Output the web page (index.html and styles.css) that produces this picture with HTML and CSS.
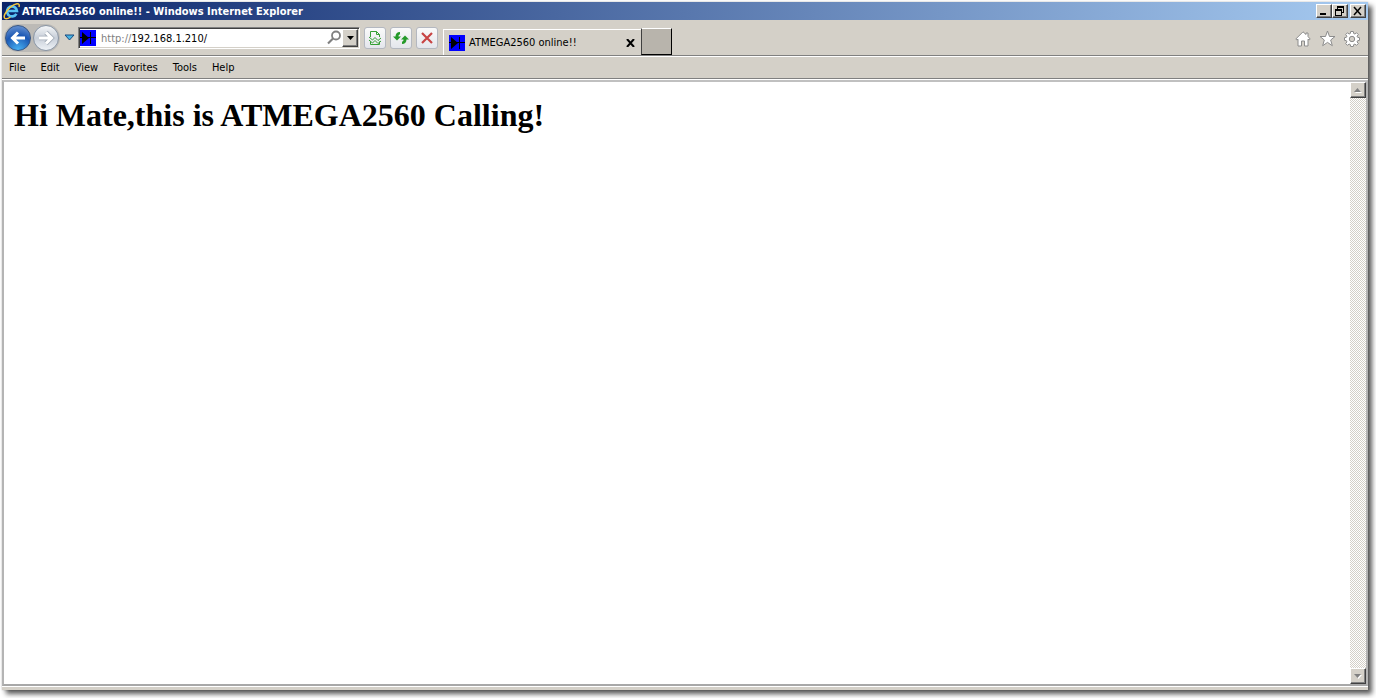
FILE: index.html
```html
<!DOCTYPE html>
<html lang="en">
<head>
    <meta charset="UTF-8">
    <title>ATMEGA2560 online!!</title>
    <link rel="stylesheet" href="styles.css">
</head>
<body>
    <!-- shapes used more than once -->
    <svg width="0" height="0" class="defs">
        <symbol id="diode" viewBox="0 0 16 16">
            <path fill="#00f" d="M0 0h16v16H0z"/>
            <path d="M2 2l7 6-7 6zM10 2h1v12h-1zM0 7h16v1H0z"/>
        </symbol>
    </svg>

    <div class="window">
        <div class="titlebar">
            <svg class="logo" width="18" height="18" viewBox="0 0 18 18">
                <path d="M13.4 11.8A5 5 0 1 1 14 9H5" fill="none" stroke="#58c4f4" stroke-width="2.6"/>
                <path d="M16 5C17.5 0 12 1 7 5.500C2 10 0 15 2 16.500C3.500 17.500 6 16 7.500 15" fill="none" stroke="#f5c73c" stroke-width="1.500"/>
            </svg>
            <span class="caption">ATMEGA2560 online!! - Windows Internet Explorer</span>
            <button class="raised" aria-label="Minimize">
                <svg width="12" height="10"><path d="M2 7h6v2H2z"/></svg>
            </button>
            <button class="raised" aria-label="Restore">
                <svg width="12" height="10"><path fill-rule="evenodd" d="M3 0h7v7H8V6h1V2H4v1H3zM1 3h7v7H1zM2 5v4h5V5z"/></svg>
            </button>
            <button class="raised close" aria-label="Close">
                <svg width="12" height="10"><path d="M2 1l7 8M9 1L2 9" stroke="#000" stroke-width="1.500"/></svg>
            </button>
        </div>

        <div class="toolbar">
            <div class="nav">
                <button class="round back" aria-label="Back">
                    <svg width="18" height="18"><path d="M16 9H4M9 3.500L3.500 9L9 14.500" fill="none" stroke="#fff" stroke-width="3"/></svg>
                </button>
                <button class="round forward" aria-label="Forward">
                    <svg width="18" height="18"><path d="M2 9H14M9 3.500L14.500 9L9 14.500" fill="none" stroke="#a3acb8" stroke-width="4.600"/><path d="M2 9H14M9 3.500L14.500 9L9 14.500" fill="none" stroke="#fff" stroke-width="3"/></svg>
                </button>
            </div>
            <button class="recent" aria-label="Recent pages">
                <svg width="11" height="7"><path d="M1 1h9L5.500 6z" fill="#48b4e4" stroke="#174a80"/></svg>
            </button>
            <div class="address">
                <svg width="16" height="16"><use href="#diode"/></svg>
                <label for="url">http://</label>
                <input type="text" id="url" value="192.168.1.210/">
                <button class="search" aria-label="Search">
                    <svg width="15" height="15"><circle cx="9" cy="5.500" r="4" fill="none" stroke="#808080" stroke-width="1.800"/><path d="M6 8.500L1 13.500" stroke="#808080" stroke-width="2.200"/></svg>
                </button>
                <button class="raised drop" aria-label="Show address list">
                    <svg width="7" height="4"><path d="M0 0h7L3.500 4z"/></svg>
                </button>
            </div>
            <button class="tool" aria-label="Compatibility View">
                <svg width="14" height="16"><path d="M2.500 7V1.500h6l3 3V7M8.500 1.500v3h3M2.500 11.500v3h9v-3" fill="none" stroke="#35a035"/><path d="M1 7l3.500 3L7 7.500l3 3L13 8M1 10l3.500 3L7 10.500l3 3L13 11" fill="none" stroke="#35a035"/></svg>
            </button>
            <button class="tool" aria-label="Refresh">
                <svg width="16" height="16"><path d="M0 6.500h2.500C2.500 4 4 2 7 2v2.500C6 4.500 5.500 5 5.500 6.500H8L4 10.500z" fill="#259a2a"/><path d="M16 9.500h-2.500c0 2.500-1.500 4.500-4.500 4.500v-2.500c1 0 1.500-.5 1.500-2H8l4-4z" fill="#259a2a"/></svg>
            </button>
            <button class="tool" aria-label="Stop">
                <svg width="14" height="14"><path d="M2 2l10 10M12 2L2 12" stroke="#c84444" stroke-width="2.200"/></svg>
            </button>
            <div class="tabs">
                <div class="tab">
                    <svg width="16" height="16"><use href="#diode"/></svg>
                    <span>ATMEGA2560 online!!</span>
                    <button aria-label="Close tab">
                        <svg width="9" height="8"><path d="M1 0l7 8M8 0L1 8" stroke="#000" stroke-width="2"/></svg>
                    </button>
                </div>
                <button class="newtab" aria-label="New tab"></button>
            </div>
            <div class="commands">
                <button aria-label="Home">
                    <svg width="16" height="16"><path d="M8 .8L.8 8l1 1L3 8.200V15h3.500v-5h3v5H13V8.200L14.200 9l1-1L13 5.500V2h-2v1.500z" fill="#fff" stroke="#8c8c8c"/></svg>
                </button>
                <button aria-label="Favorites">
                    <svg width="17" height="17"><path d="M8.500 1l2 5.500H16l-4.300 3.500 1.600 5.700-4.800-3.300-4.800 3.300L5.300 10 1 6.500h5.500z" fill="#fff" stroke="#8c8c8c"/></svg>
                </button>
                <button aria-label="Tools">
                    <svg width="16" height="16">
                        <path d="M6.700 .5h2.600l.4 2 1.200.5 1.700-1.200 1.700 1.700L13.100 5.200l.5 1.100 1.900.4v2.600l-1.900.4-.5 1.200 1.200 1.700-1.700 1.700-1.700-1.200-1.200.5-.4 1.900H6.700l-.4-1.900-1.200-.5-1.700 1.200-1.700-1.700 1.200-1.700-.5-1.200-1.900-.4V6.700l1.900-.4.5-1.100L1.700 3.500l1.700-1.700L5.100 3l1.200-.5z" fill="#fff" stroke="#8c8c8c"/>
                        <circle cx="8" cy="8" r="2.700" fill="#d4d0c8" stroke="#8c8c8c"/>
                    </svg>
                </button>
            </div>
        </div>

        <div class="menubar">
            <button>File</button>
            <button>Edit</button>
            <button>View</button>
            <button>Favorites</button>
            <button>Tools</button>
            <button>Help</button>
        </div>

        <div class="view">
            <div class="page">
                <h1>Hi Mate,this is ATMEGA2560 Calling!</h1>
            </div>
            <div class="scrollbar">
                <button class="raised" aria-label="Scroll up">
                    <svg width="8" height="5"><path d="M1 5h7L4.500 1z" fill="#fff"/><path d="M0 4h7L3.500 0z" fill="#808080"/></svg>
                </button>
                <button class="raised" aria-label="Scroll down">
                    <svg width="8" height="5"><path d="M1 1h7L4.500 5z" fill="#fff"/><path d="M0 0h7L3.500 4z" fill="#808080"/></svg>
                </button>
            </div>
        </div>
    </div>
</body>
</html>
```
FILE: styles.css
```css
*{
    box-sizing: border-box;
    padding: 0;
    margin: 0;
}

body{
    height: 100vh;
    padding: 2px 8px 8px 2px;
    background: #fff;
    font: 11px/14px "DejaVu Sans Condensed", "DejaVu Sans", sans-serif;
    color: #000;
}

button, input{
    border: 0;
    background: none;
    font: inherit;
    color: inherit;
}

button{
    display: flex;
    align-items: center;
    justify-content: center;
    flex-shrink: 0;
}

svg{
    display: block;
    flex-shrink: 0;
}

.defs{
    position: absolute;
}

.window{
    display: flex;
    flex-direction: column;
    height: 100%;
    padding-bottom: 2px;
    background: #d4d0c8;
    box-shadow: 4px 4px 5px rgba(0,0,0,.65), 0 0 2px rgba(0,0,0,.2);
}

/* raised 3D button */
.raised{
    width: 16px;
    height: 14px;
    background: #d4d0c8;
    border: 1px solid;
    border-color: #fff #404040 #404040 #fff;
    box-shadow: inset -1px -1px #808080;
}

.titlebar{
    display: flex;
    align-items: center;
    height: 18px;
    padding: 0 2px 0 1px;
    background: linear-gradient(to right, #0a246a, #a6caf0);
    color: #fff;
    font-weight: bold;
}

.caption{
    flex: 1;
    padding-top: 1px;
    margin-left: 1px;
    white-space: nowrap;
}

.close{
    margin-left: 2px;
}

.toolbar{
    display: flex;
    align-items: center;
    height: 36px;
    padding-left: 2px;
    border-bottom: 1px solid #808080;
}

.nav{
    display: flex;
    gap: 2px;
    padding: 1px;
    border-radius: 14px;
    background: #bcbab6;
}

.round{
    width: 26px;
    height: 26px;
    border-radius: 50%;
}

.back{
    border: 1px solid #355585;
    background: radial-gradient(circle at 50% 100%, #49b4f4, #1c58b4 55%, #789fd8);
}

.forward{
    border: 1px solid #8995a5;
    background: linear-gradient(#f4f6f8, #c7ced8 50%, #eef2f6);
}

.recent{
    width: 18px;
    height: 20px;
}

.address{
    display: flex;
    align-items: center;
    width: 282px;
    height: 22px;
    padding: 0 1px;
    border: 1px solid;
    border-color: #808080 #fff #fff #808080;
    box-shadow: inset 1px 1px #404040, inset -1px -1px #d4d0c8;
    background: #fff;
}

.address label{
    padding-top: 2px;
    margin-left: 5px;
    color: #808080;
}

.address input{
    flex: 1;
    min-width: 0;
    padding-top: 2px;
    outline: 0;
}

.search{
    width: 16px;
}

.drop{
    height: 18px;
}

.tool{
    width: 22px;
    height: 22px;
    margin-left: 4px;
    border: 1px solid #b4b8c0;
    border-radius: 3px;
    background: linear-gradient(#fafafa, #e4e6ec);
}

.tabs{
    display: flex;
    align-self: flex-end;
    margin-left: 5px;
}

.tab{
    display: flex;
    align-items: center;
    width: 198px;
    height: 26px;
    padding: 0 6px 0 5px;
    border: 1px solid #fff;
    border-width: 1px 0 0 1px;
}

.tab span{
    flex: 1;
    padding-top: 1px;
    margin-left: 4px;
    white-space: nowrap;
}

.newtab{
    width: 31px;
    height: 27px;
    border: 1px solid;
    border-color: #fff #000 #000 #404040;
    background: #b8b4ac;
}

.tabs{
    align-items: flex-end;
}

.commands{
    display: flex;
    gap: 8px;
    padding-top: 2px;
    margin-left: auto;
    padding-right: 8px;
}

.menubar{
    display: flex;
    gap: 15px;
    height: 23px;
    padding: 1px 0 0 7px;
    border-top: 1px solid #fff;
    border-bottom: 1px solid #808080;
}

.view{
    display: flex;
    flex: 1;
    min-height: 0;
    border: 2px solid #b4b4b4;
    border-top-color: #c0c0c0;
    border-bottom-color: #a8a8a8;
    box-shadow: 0 -1px #fff, 0 1px #fff;
    margin: 1px 0 2px;
    background: #fff;
}

.page{
    flex: 1;
    padding: 15px 10px;
    overflow: hidden;
}

h1{
    font: bold 32px/36px "Liberation Serif", "Times New Roman", serif;
}

.scrollbar{
    display: flex;
    flex-direction: column;
    justify-content: space-between;
    background: conic-gradient(#fff 25%, #d4d0c8 0 50%, #fff 0 75%, #d4d0c8 0) 0 0/2px 2px;
}

.scrollbar .raised{
    height: 16px;
}
```
